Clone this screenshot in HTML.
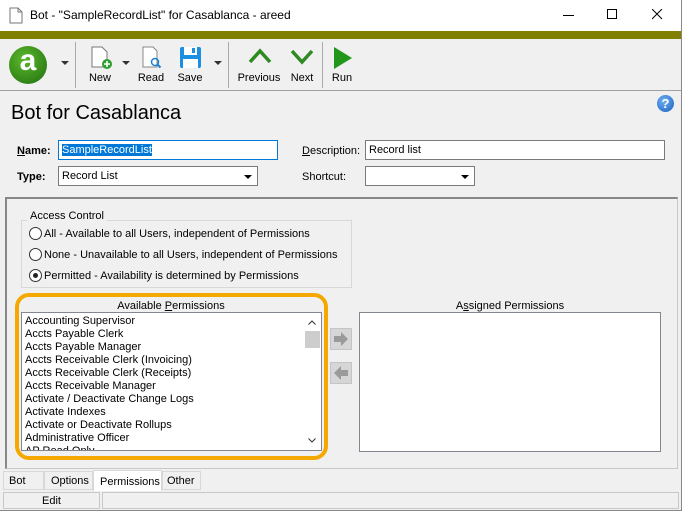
<!DOCTYPE html>
<html><head><style>
*{margin:0;padding:0;box-sizing:border-box}
body{width:682px;height:511px;background:#f0f0f0;font-family:"Liberation Sans",sans-serif;font-size:11px;color:#000;position:relative;overflow:hidden}
.a{position:absolute}
.tb{text-align:center;font-size:11px}
.inp{position:absolute;background:#fff;border:1px solid #7a7a7a;height:20px;padding:3px 3px 0;font-size:11px}
.list div{height:13px;line-height:13px;padding-left:3px;white-space:nowrap}
.radio{position:absolute;width:13px;height:13px;border:1px solid #333;border-radius:50%;background:#fff}
</style></head><body>
<div class="a" style="left:0;top:0;width:682px;height:31px;background:#fff;border-right:1px solid #888"></div>
<svg class="a" style="left:9px;top:7px" width="14" height="17"><path d="M1 1h8l4 4v11H1z M9 1v4h4" fill="#fff" stroke="#777"/></svg>
<div class="a" style="left:30px;top:8px;font-size:12px">Bot - "SampleRecordList" for Casablanca - areed</div>
<div class="a" style="left:563px;top:15px;width:11px;height:1px;background:#000"></div>
<div class="a" style="left:607px;top:9px;width:10px;height:10px;border:1px solid #000"></div>
<svg class="a" style="left:652px;top:9px" width="11" height="11"><path d="M0 0L10 10M10 0L0 10" stroke="#000"/></svg>
<div class="a" style="left:0;top:31px;width:682px;height:8px;background:#808000"></div>
<div class="a" style="left:0;top:90px;width:682px;height:1px;background:#a0a0a0"></div>
<div class="a" style="left:9px;top:46px;width:38px;height:38px;border-radius:50%;background:radial-gradient(circle at 40% 35%,#5cb82a,#1e6e10);"></div>
<div class="a" style="left:9px;top:44px;width:38px;text-align:center;color:#fff;font-size:30px;font-weight:bold">a</div>
<svg class="a" style="left:61px;top:61px" width="8" height="4"><path d="M0 0h8L4 4z" fill="#333"/></svg>
<div class="a" style="left:75px;top:42px;width:1px;height:46px;background:#aaa"></div>
<svg class="a" style="left:90px;top:46px" width="24" height="24"><path d="M2 1h10l5 5v15H2z" fill="#fff" stroke="#777"/><circle cx="17" cy="18" r="5" fill="#2f9e2f"/><path d="M17 15v6M14 18h6" stroke="#fff" stroke-width="1.6"/></svg>
<svg class="a" style="left:122px;top:61px" width="8" height="4"><path d="M0 0h8L4 4z" fill="#333"/></svg>
<svg class="a" style="left:140px;top:46px" width="24" height="24"><path d="M3 1h10l4 4v16H3z" fill="#fff" stroke="#888"/><circle cx="15" cy="16" r="3.5" fill="none" stroke="#1b7fd4" stroke-width="1.5"/><path d="M17.5 18.5l3 3" stroke="#1b7fd4" stroke-width="2"/></svg>
<svg class="a" style="left:179px;top:46px" width="24" height="24"><rect x="1" y="1" width="21" height="21" rx="2" fill="#1b8fe0"/><rect x="5" y="1" width="13" height="8" fill="#fff"/><rect x="13" y="2" width="3" height="5" fill="#1b8fe0"/><rect x="4" y="13" width="15" height="9" fill="#fff"/></svg>
<svg class="a" style="left:214px;top:61px" width="8" height="4"><path d="M0 0h8L4 4z" fill="#333"/></svg>
<div class="a" style="left:228px;top:42px;width:1px;height:46px;background:#aaa"></div>
<svg class="a" style="left:248px;top:48px" width="24" height="16"><path d="M2 14L12 3l10 11" fill="none" stroke="#2e8b22" stroke-width="3.5"/></svg>
<svg class="a" style="left:290px;top:49px" width="24" height="16"><path d="M2 2l10 11L22 2" fill="none" stroke="#2e8b22" stroke-width="3.5"/></svg>
<div class="a" style="left:322px;top:42px;width:1px;height:46px;background:#aaa"></div>
<svg class="a" style="left:333px;top:46px" width="20" height="24"><path d="M1 1L19 12L1 23z" fill="#22961a"/></svg>
<div class="a tb" style="left:84px;top:72px;width:32px">New</div>
<div class="a tb" style="left:135px;top:72px;width:32px">Read</div>
<div class="a tb" style="left:174px;top:72px;width:32px">Save</div>
<div class="a tb" style="left:235px;top:72px;width:48px">Previous</div>
<div class="a tb" style="left:286px;top:72px;width:32px">Next</div>
<div class="a tb" style="left:328px;top:72px;width:28px">Run</div>
<div class="a" style="left:11px;top:102px;font-size:20px">Bot for Casablanca</div>
<div class="a" style="left:657px;top:95px;width:17px;height:17px;border-radius:50%;background:radial-gradient(circle at 40% 35%,#6fb0f0,#1a5fc0);color:#fff;font-weight:bold;font-size:13px;text-align:center;line-height:17px">?</div>
<div class="a" style="left:17px;top:145px;font-weight:bold"><u>N</u>ame:</div>
<div class="inp" style="left:58px;top:140px;width:220px;border-color:#0078d7"><span style="background:#0078d7;color:#fff">SampleRecordList</span></div>
<div class="a" style="left:17px;top:171px;font-weight:bold">Type:</div>
<div class="inp" style="left:58px;top:166px;width:200px">Record List</div>
<svg class="a" style="left:244px;top:175px" width="8" height="4"><path d="M0 0h8L4 4z" fill="#000"/></svg>
<div class="a" style="left:302px;top:145px"><u>D</u>escription:</div>
<div class="inp" style="left:365px;top:140px;width:300px">Record list</div>
<div class="a" style="left:302px;top:171px">Shortcut:</div>
<div class="inp" style="left:365px;top:166px;width:110px"></div>
<svg class="a" style="left:461px;top:175px" width="8" height="4"><path d="M0 0h8L4 4z" fill="#000"/></svg>
<div class="a" style="left:5px;top:197px;width:673px;height:272px;border:1px solid #c8c8c8;border-top:2px solid #888;border-left:2px solid #888;"></div>
<div class="a" style="left:21px;top:220px;width:331px;height:68px;border:1px solid #d8d8d8"></div>
<div class="a" style="left:27px;top:210px;background:#f0f0f0;padding:0 3px">Access Control</div>
<div class="radio" style="left:29px;top:227px"></div>
<div class="a" style="left:44px;top:228px">All - Available to all Users, independent of Permissions</div>
<div class="radio" style="left:29px;top:248px"></div>
<div class="a" style="left:44px;top:249px">None - Unavailable to all Users, independent of Permissions</div>
<div class="radio" style="left:29px;top:269px"></div>
<div class="a" style="left:33px;top:273px;width:5px;height:5px;border-radius:50%;background:#222"></div>
<div class="a" style="left:44px;top:270px">Permitted - Availability is determined by Permissions</div>
<div class="a" style="left:15px;top:293px;width:313px;height:167px;border:4px solid #f5a800;border-radius:14px"></div>
<div class="a" style="left:21px;top:300px;width:300px;text-align:center">Available <u>P</u>ermissions</div>
<div class="a list" style="left:21px;top:312px;width:301px;height:139px;background:#fff;border:1px solid #828790;overflow:hidden;padding-top:2px">
<div>Accounting Supervisor</div><div>Accts Payable Clerk</div><div>Accts Payable Manager</div><div>Accts Receivable Clerk (Invoicing)</div><div>Accts Receivable Clerk (Receipts)</div><div>Accts Receivable Manager</div><div>Activate / Deactivate Change Logs</div><div>Activate Indexes</div><div>Activate or Deactivate Rollups</div><div>Administrative Officer</div><div>AP Read Only</div>
</div>
<div class="a" style="left:304px;top:313px;width:17px;height:137px;background:#fff"></div>
<div class="a" style="left:305px;top:331px;width:15px;height:17px;background:#cdcdcd"></div>
<svg class="a" style="left:308px;top:320px" width="8" height="5"><path d="M0.5 4.5L4 1l3.5 3.5" fill="none" stroke="#333"/></svg>
<svg class="a" style="left:308px;top:438px" width="8" height="5"><path d="M0.5 0.5L4 4l3.5-3.5" fill="none" stroke="#333"/></svg>
<div class="a" style="left:330px;top:328px;width:22px;height:22px;background:#d6d6d6;border:1px solid #c4c4c4"></div>
<svg class="a" style="left:333px;top:331px" width="16" height="16"><path d="M1 5h7V1l7 7-7 7v-4H1z" fill="#9a9a9a"/></svg>
<div class="a" style="left:330px;top:362px;width:22px;height:22px;background:#d6d6d6;border:1px solid #c4c4c4"></div>
<svg class="a" style="left:333px;top:365px" width="16" height="16"><path d="M15 5H8V1L1 8l7 7v-4h7z" fill="#9a9a9a"/></svg>
<div class="a" style="left:359px;top:300px;width:302px;text-align:center">A<u>s</u>signed Permissions</div>
<div class="a" style="left:359px;top:312px;width:302px;height:140px;background:#fff;border:1px solid #828790"></div>
<div class="a" style="left:3px;top:471px;width:41px;height:19px;border:1px solid #d8d8d8;padding:3px 5px">Bot</div>
<div class="a" style="left:44px;top:471px;width:49px;height:19px;border:1px solid #d8d8d8;padding:3px 6px">Options</div>
<div class="a" style="left:93px;top:470px;width:69px;height:21px;background:#fff;border:1px solid #d8d8d8;border-bottom:none;padding:5px 6px">Permissions</div>
<div class="a" style="left:162px;top:471px;width:39px;height:19px;border:1px solid #d8d8d8;padding:3px 4px">Other</div>
<div class="a" style="left:3px;top:492px;width:97px;height:17px;border:1px solid #c8c8c8;text-align:center;padding-top:2px">Edit</div>
<div class="a" style="left:102px;top:492px;width:577px;height:17px;border:1px solid #c8c8c8"></div>
<div class="a" style="left:0;top:510px;width:682px;height:1px;background:#888"></div>
<div class="a" style="left:681px;top:31px;width:1px;height:480px;background:#888"></div>
</body></html>
